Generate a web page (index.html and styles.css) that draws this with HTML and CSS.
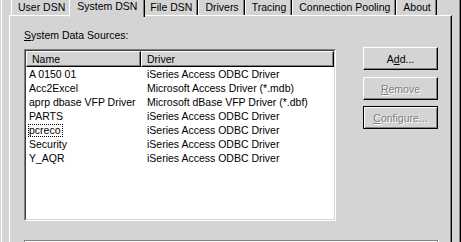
FILE: index.html
```html
<!DOCTYPE html>
<html lang="en">
<head>
    <meta charset="UTF-8">
    <title>ODBC Data Source Administrator</title>
    <link rel="stylesheet" href="styles.css">
</head>
<body>
    <div class="window">
        <div class="frame">
            <div class="tabs">
                <div class="tab">User DSN</div>
                <div class="tab selected">System DSN</div>
                <div class="tab">File DSN</div>
                <div class="tab">Drivers</div>
                <div class="tab">Tracing</div>
                <div class="tab">Connection Pooling</div>
                <div class="tab">About</div>
            </div>

            <div class="panel">
                <div class="sources">
                    <div class="sources-list">
                        <div class="caption"><u>S</u>ystem Data Sources:</div>
                        <div class="listbox">
                            <div class="listbox-inner">
                                <div class="list-header">
                                    <div class="col-head name">Name</div>
                                    <div class="col-head driver">Driver</div>
                                </div>
                                <div class="row"><span class="cell name">A 0150 01</span><span class="cell driver">iSeries Access ODBC Driver</span></div>
                                <div class="row"><span class="cell name">Acc2Excel</span><span class="cell driver">Microsoft Access Driver (*.mdb)</span></div>
                                <div class="row"><span class="cell name">aprp dbase VFP Driver</span><span class="cell driver">Microsoft dBase VFP Driver (*.dbf)</span></div>
                                <div class="row"><span class="cell name">PARTS</span><span class="cell driver">iSeries Access ODBC Driver</span></div>
                                <div class="row"><span class="cell name"><span class="focus">pcreco</span></span><span class="cell driver">iSeries Access ODBC Driver</span></div>
                                <div class="row"><span class="cell name">Security</span><span class="cell driver">iSeries Access ODBC Driver</span></div>
                                <div class="row"><span class="cell name">Y_AQR</span><span class="cell driver">iSeries Access ODBC Driver</span></div>
                            </div>
                        </div>
                    </div>

                    <div class="buttons">
                        <button class="btn">A<u>d</u>d...</button>
                        <button class="btn" disabled><u>R</u>emove</button>
                        <button class="btn default" disabled><u>C</u>onfigure...</button>
                    </div>
                </div>

                <div class="groupbox"></div>
            </div>
        </div>
    </div>
</body>
</html>
```

FILE: styles.css
```css
html, body {
    margin: 0;
    padding: 0;
    background-color: #d4d4d4;
    overflow: hidden;
}
body {
    font-family: "Liberation Sans", Arial, sans-serif;
    font-size: 10.5px;
    color: #000;
}
.window {
    width: 461px;
    height: 242px;
    box-sizing: border-box;
    padding-left: 1px;
    border-right: 1px solid #000;
}
.frame {
    height: 100%;
    box-sizing: border-box;
    border-left: 1px solid #fff;
    border-right: 1px solid #808080;
    padding: 0 7px;
}
.tabs {
    display: flex;
    height: 15px;
    padding-left: 2px;
}
.tab {
    height: 15px;
    line-height: 14px;
    padding: 0 5px 0 6px;
    border-left: 1px solid #fff;
    border-right: 1px solid #000;
    box-shadow: inset -1px 0 #808080;
    white-space: nowrap;
}
.tab.selected {
    position: relative;
    z-index: 1;
    height: 17px;
    line-height: 13px;
    margin: 0 -2px;
    padding: 0 7px;
    background-color: #d4d4d4;
}
.panel {
    height: 227px;
    box-sizing: border-box;
    border-left: 1px solid #fff;
    border-top: 1px solid #fff;
    border-right: 1px solid #000;
    box-shadow: inset -1px 0 #808080;
    padding: 13px 0 0 14px;
}
.sources {
    display: flex;
    align-items: flex-start;
}
.caption {
    line-height: 13px;
    margin-bottom: 7px;
}
.listbox {
    width: 312px;
    height: 172px;
    box-sizing: border-box;
    border: 1px solid;
    border-color: #808080 #fff #fff #808080;
}
.listbox-inner {
    height: 100%;
    box-sizing: border-box;
    border: 1px solid;
    border-color: #404040 #d4d4d4 #d4d4d4 #404040;
    background-color: #fff;
}
.list-header {
    display: flex;
    height: 16px;
}
.col-head {
    box-sizing: border-box;
    height: 16px;
    line-height: 14px;
    padding-left: 5px;
    background-color: #d4d4d4;
    border-left: 1px solid #fff;
    border-top: 1px solid #fff;
    border-right: 1px solid #000;
    border-bottom: 1px solid #000;
    box-shadow: inset -1px -1px #808080;
}
.col-head.name {
    width: 115px;
}
.col-head.driver {
    width: 193px;
}
.row {
    display: flex;
    height: 14px;
    line-height: 14px;
    white-space: nowrap;
}
.cell.name {
    width: 115px;
    padding-left: 3px;
    box-sizing: border-box;
}
.cell.driver {
    padding-left: 6px;
}
.focus {
    margin-left: -1px;
    padding: 0 1px 0 0;
    border: 1px dotted #000;
    line-height: 11px;
    display: inline-block;
}
.buttons {
    display: flex;
    flex-direction: column;
    gap: 7px;
    margin: 18px 0 0 27px;
}
.btn {
    width: 75px;
    height: 23px;
    box-sizing: border-box;
    padding: 0;
    font-family: inherit;
    font-size: 10.5px;
    color: #000;
    background-color: #d4d4d4;
    border: 1px solid;
    border-color: #fff #000 #000 #fff;
    box-shadow: inset -1px -1px #808080;
}
.btn:disabled {
    color: #808080;
    text-shadow: 1px 1px 0 #fff;
}
.btn.default {
    margin-top: -1px;
    border-color: #000;
    box-shadow: inset 1px 1px #fff, inset -1px -1px #808080;
}
.groupbox {
    width: 414px;
    height: 2px;
    box-sizing: border-box;
    margin-top: 19px;
    border: 1px solid #808080;
    border-bottom: none;
    box-shadow: inset 1px 1px #fff, 1px 0 #fff;
}
```
